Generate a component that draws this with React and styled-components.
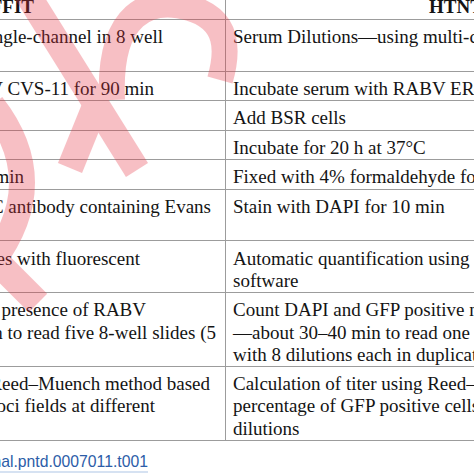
import React from "react";
import styled, { createGlobalStyle } from "styled-components";

const Global = createGlobalStyle`
  html, body { margin: 0; padding: 0; background: #ffffff; }
  body { width: 474px; height: 474px; overflow: hidden; position: relative; }
`;

const Page = styled.div`
  position: relative;
  width: 474px;
  height: 474px;
  overflow: hidden;
  font-family: "Liberation Serif", "Times New Roman", serif;
  color: #141414;
`;

const Table = styled.div`
  display: flex;
  flex-direction: column;
`;

const Row = styled.div`
  display: grid;
  grid-template-columns: 226px 1fr;
  border-bottom: 1px solid #9c9c9c;
  height: ${(p) => p.$h}px;
  box-sizing: border-box;
`;

const Cell = styled.div`
  overflow: hidden;
  padding-top: ${(p) => (p.$head ? 0 : 6.3)}px;
  font-size: 19px;
  line-height: 22.2px;
  ${(p) => (p.$left ? "border-right: 1px solid #9c9c9c;" : "padding-left: 7px;")}
`;

const HeadText = styled.div`
  font-weight: bold;
  margin-top: -4.5px;
  white-space: nowrap;
  padding-left: ${(p) => p.$indent || 0}px;
`;

const LeftLine = styled.div`
  display: flex;
  justify-content: flex-end;
  width: ${(p) => p.$end}px;
  height: 22.2px;
  white-space: nowrap;
`;

const RightLine = styled.div`
  white-space: nowrap;
  height: 22.2px;
`;

const Footer = styled.div`
  display: flex;
  justify-content: flex-end;
  width: 148px;
  margin-top: 12px;
  white-space: nowrap;
  font-family: "Liberation Sans", Arial, sans-serif;
  font-size: 15.75px;
  line-height: 18px;
  color: #2d5da8;
  border-bottom: 2px solid #d6e2f2;
`;

const Watermark = styled.svg`
  position: absolute;
  left: 0;
  top: 0;
  pointer-events: none;
`;

const rows = [
  { h: 51.7, left: [{ t: "Serial dilutions—using single-channel in 8 well", e: 163 }], right: ["Serum Dilutions—using multi-channel in 96-well"] },
  { h: 29.5, left: [{ t: "Incubate serum with RABV CVS-11 for 90 min", e: 154 }], right: ["Incubate serum with RABV ERA-GFP for 60 min"] },
  { h: 29.5, left: [], right: ["Add BSR cells"] },
  { h: 29.5, left: [], right: ["Incubate for 20 h at 37°C"] },
  { h: 29.5, left: [{ t: "Fixed with 80% acetone for 10 min", e: 24 }], right: ["Fixed with 4% formaldehyde for 30 min"] },
  { h: 51.7, left: [{ t: "Stain with FITC antibody containing Evans", e: 211 }], right: ["Stain with DAPI for 10 min"] },
  { h: 51.7, left: [{ t: "Read slides with fluorescent", e: 140 }], right: ["Automatic quantification using Celigo", "software"] },
  {
    h: 73.9,
    left: [
      { t: "Read 20 fields per well for presence of RABV", e: 146 },
      { t: "—about 90 min to read five 8-well slides (5", e: 216 },
    ],
    right: ["Count DAPI and GFP positive nuclei", "—about 30–40 min to read one plate", "with 8 dilutions each in duplicate"],
  },
  {
    h: 73.9,
    left: [
      { t: "Calculation of titer using Reed–Muench method based", e: 210 },
      { t: "on percentage of positive foci fields at different", e: 155 },
    ],
    right: ["Calculation of titer using Reed–Muench", "percentage of GFP positive cells at", "dilutions"],
  },
];

export default function App() {
  return (
    <Page>
      <Global />
      <Table>
        <Row $h={20}>
          <Cell $left $head>
            <LeftLine $end={34}>
              <HeadText>RFFIT</HeadText>
            </LeftLine>
          </Cell>
          <Cell $head>
            <HeadText $indent={196}>HTNT</HeadText>
          </Cell>
        </Row>
        {rows.map((r, i) => (
          <Row key={i} $h={r.h}>
            <Cell $left>
              {r.left.map((l, j) => (
                <LeftLine key={j} $end={l.e}>
                  <span>{l.t}</span>
                </LeftLine>
              ))}
            </Cell>
            <Cell>
              {r.right.map((t, j) => (
                <RightLine key={j}>{t}</RightLine>
              ))}
            </Cell>
          </Row>
        ))}
      </Table>
      <Footer>
        <span>https://doi.org/10.1371/journal.pntd.0007011.t001</span>
      </Footer>
      <Watermark width="474" height="474" viewBox="0 0 474 474">
        <g opacity="0.3" fill="none" stroke="#e63040" strokeWidth="26">
          <path d="M 26 -8 L 137 170" />
          <path d="M 112 100 C 108 12, 150 -4, 190 8 S 228 52, 220 80" />
          <path d="M 70 168 L 96 104" />
          <path d="M -8 105 Q 52 182 -8 262" />
          <path d="M -10 255 L 38 303" />
        </g>
      </Watermark>
    </Page>
  );
}
